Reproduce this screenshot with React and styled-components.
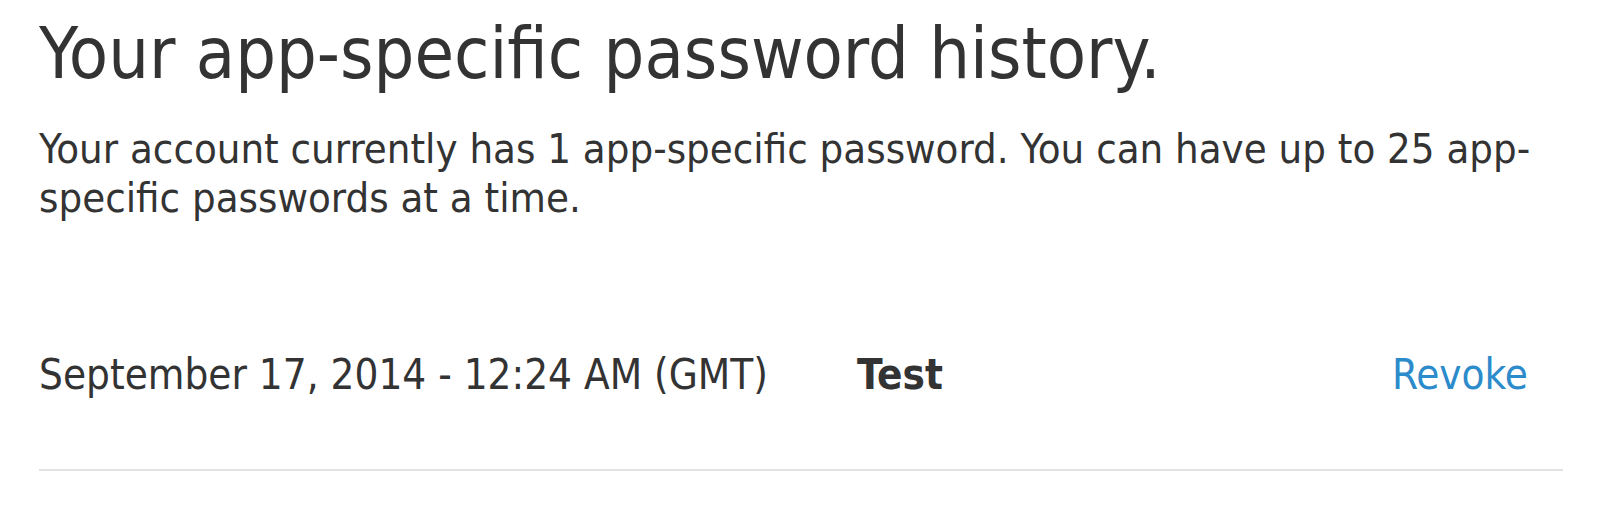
import React from "react";
import styled, { createGlobalStyle } from "styled-components";

const GlobalStyle = createGlobalStyle`
  html, body {
    margin: 0;
    padding: 0;
    background: #ffffff;
  }

  body {
    font-family: "DejaVu Sans Condensed", "DejaVu Sans", sans-serif;
    color: #333333;
  }
`;

const passwords = [
  {
    id: 1,
    created: "September 17, 2014 - 12:24 AM (GMT)",
    label: "Test"
  }
];

function App() {
  return (
    <>
      <GlobalStyle />
      <Page>
        <Title>Your app-specific password history.</Title>
        <Intro>
          Your account currently has {passwords.length} app-specific password.
          You can have up to 25 app-specific passwords at a time.
        </Intro>
        <List>
          {passwords.map(item => (
            <Row key={item.id}>
              <DateCell>{item.created}</DateCell>
              <LabelCell>{item.label}</LabelCell>
              <RevokeLink href="#">Revoke</RevokeLink>
            </Row>
          ))}
        </List>
      </Page>
    </>
  );
}

const Page = styled.main`
  width: 1524px;
  padding: 16px 0 0 39px;
`;

const Title = styled.h1`
  margin: 0;
  font-size: 71.5px;
  font-weight: normal;
  line-height: 76px;
`;

const Intro = styled.p`
  margin: 32px 0 0;
  font-size: 41.5px;
  line-height: 49px;
`;

const List = styled.ul`
  list-style: none;
  margin: 0;
  padding: 0;
`;

const Row = styled.li`
  display: flex;
  align-items: baseline;
  padding: 128px 35px 70px 0;
  border-bottom: 2px solid #e2e2e2;
  font-size: 41.8px;
  line-height: 49px;
`;

const DateCell = styled.span`
  width: 818px;
  flex-shrink: 0;
`;

const LabelCell = styled.span`
  flex: 1;
  font-weight: bold;
`;

const RevokeLink = styled.a`
  color: #2c8bcb;
  text-decoration: none;
`;

export default App;
